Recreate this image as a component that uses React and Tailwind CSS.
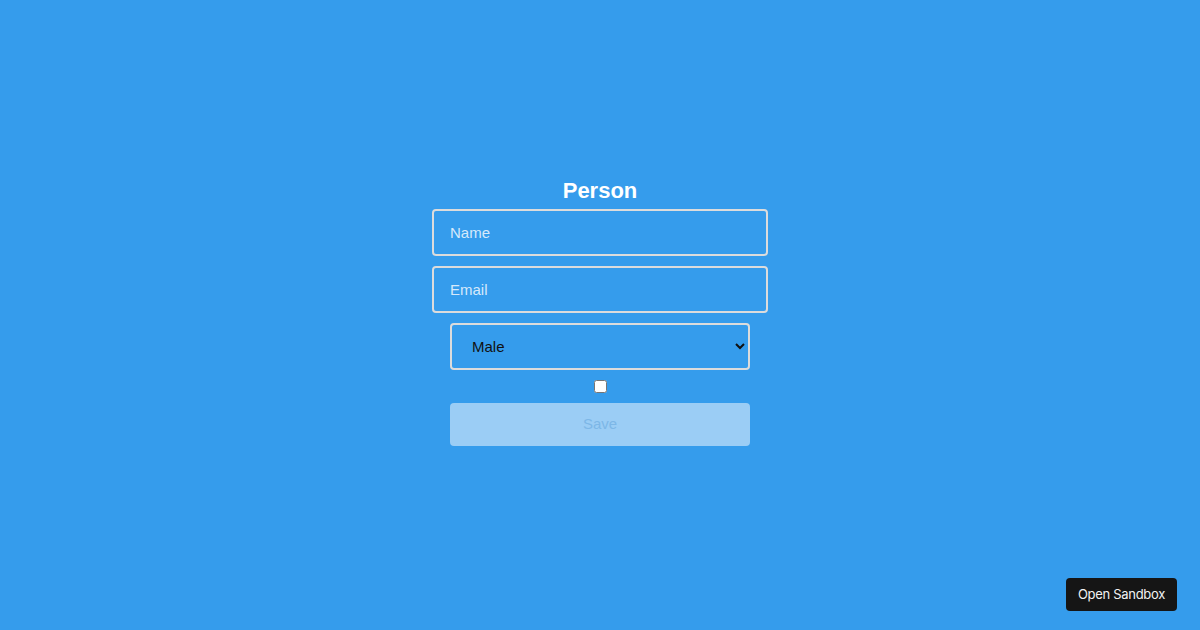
import { useState } from "react";

export default function App() {
  const [name, setName] = useState("");
  const [email, setEmail] = useState("");
  const [gender, setGender] = useState("male");
  const [agree, setAgree] = useState(false);

  const canSave = name && email && agree;

  return (
    <div className="relative min-h-screen w-full bg-[#359cec] flex flex-col items-center justify-center font-['Liberation_Sans',Arial,sans-serif]">
      <form className="flex flex-col items-center pb-[6px]" onSubmit={(e) => e.preventDefault()}>
        <h1 className="text-white font-bold text-[22px] leading-[26px] mb-[5px]">Person</h1>
        <input
          type="text"
          placeholder="Name"
          value={name}
          onChange={(e) => setName(e.target.value)}
          className="w-[336px] h-[47px] border-2 border-[#dcdcdc] rounded-[4px] bg-transparent px-[16px] text-[15px] text-white placeholder:text-[#d5e9fb] outline-none"
        />
        <input
          type="email"
          placeholder="Email"
          value={email}
          onChange={(e) => setEmail(e.target.value)}
          className="mt-[10px] w-[336px] h-[47px] border-2 border-[#dcdcdc] rounded-[4px] bg-transparent px-[16px] text-[15px] text-white placeholder:text-[#d5e9fb] outline-none"
        />
        <select
          value={gender}
          onChange={(e) => setGender(e.target.value)}
          className="mt-[10px] w-[300px] h-[47px] border-2 border-[#dcdcdc] rounded-[4px] bg-transparent pl-[16px] pr-[2px] text-[15px] text-[#111] outline-none"
        >
          <option value="male">Male</option>
          <option value="female">Female</option>
        </select>
        <input
          type="checkbox"
          checked={agree}
          onChange={(e) => setAgree(e.target.checked)}
          className="mt-[10px] w-[13px] h-[13px]"
        />
        <button
          type="submit"
          disabled={!canSave}
          className="mt-[10px] w-[300px] h-[43px] rounded-[4px] bg-[#9bcdf5] text-[15px] text-[#7db7e7]"
        >
          Save
        </button>
      </form>

      <button className="absolute right-[23px] bottom-[19px] h-[33px] px-[12px] rounded-[4px] bg-[#151515] text-[#f2f2f2] text-[13px] tracking-[-0.3px] font-['Inter',sans-serif]">
        Open Sandbox
      </button>
    </div>
  );
}
